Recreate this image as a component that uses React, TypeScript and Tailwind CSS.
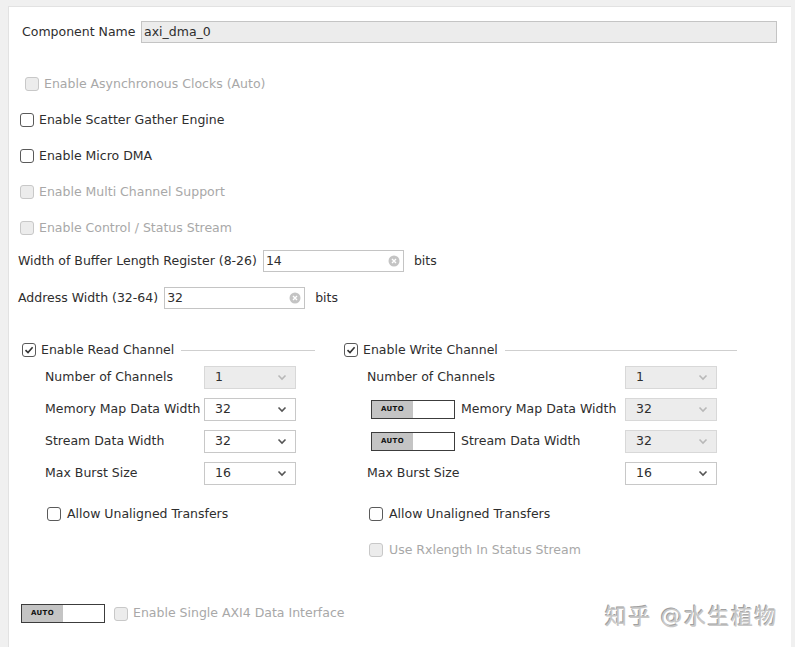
import React from 'react';

const font = { fontFamily: '"DejaVu Sans", "Noto Sans CJK SC", sans-serif' };

function CheckBox({ checked = false, disabled = false }: { checked?: boolean; disabled?: boolean }) {
  return (
    <span
      className={
        'flex h-[14px] w-[14px] shrink-0 items-center justify-center rounded-[3px] border ' +
        (disabled ? 'border-[#c8c8c8] bg-[#ececec]' : 'border-[#5a5a5a] bg-white')
      }
    >
      {checked && (
        <svg width="10" height="10" viewBox="0 0 10 10">
          <path d="M1.5 5.2 L4 7.6 L8.6 2.2" fill="none" stroke="#333" strokeWidth="1.6" />
        </svg>
      )}
    </span>
  );
}

function CheckRow({ label, checked, disabled, gap = 'gap-[5px]' }: { label: string; checked?: boolean; disabled?: boolean; gap?: string }) {
  return (
    <div className={'flex h-[20px] items-center ' + gap}>
      <CheckBox checked={checked} disabled={disabled} />
      <span className={disabled ? 'text-[#a8a8a8]' : 'text-[#2e2e2e]'}>{label}</span>
    </div>
  );
}

function ClearInput({ value, width }: { value: string; width: string }) {
  return (
    <div className={'flex h-[22px] items-center justify-between border border-[#c4c4c4] bg-white pl-[2px] pr-[3px] ' + width}>
      <span>{value}</span>
      <svg width="12" height="12" viewBox="0 0 12 12">
        <circle cx="6" cy="6" r="5.5" fill="#c4c4c4" />
        <path d="M4 4 L8 8 M8 4 L4 8" stroke="#fff" strokeWidth="1.4" />
      </svg>
    </div>
  );
}

function Select({ value, disabled = false }: { value: string; disabled?: boolean }) {
  return (
    <div
      className={
        'flex h-[23px] w-[92px] shrink-0 items-center justify-between border pl-[10px] pr-[8px] ' +
        (disabled ? 'border-[#d8d8d8] bg-[#ececec]' : 'border-[#c8c8c8] bg-white')
      }
    >
      <span>{value}</span>
      <svg width="10" height="7" viewBox="0 0 10 7">
        <path d="M1.5 1.5 L5 5 L8.5 1.5" fill="none" stroke={disabled ? '#b8b8b8' : '#555'} strokeWidth="1.6" />
      </svg>
    </div>
  );
}

function AutoToggle() {
  return (
    <div className="flex h-[19px] w-[84px] shrink-0 border-[1.5px] border-[#3c3c3c] bg-white">
      <div className="flex w-[41px] items-center justify-center bg-[#c4c4c4] text-[7px] font-bold tracking-[0.3px] text-[#111]">
        AUTO
      </div>
    </div>
  );
}

function ParamRow({ label, value, labelWidth, disabled, auto }: { label: string; value: string; labelWidth: string; disabled?: boolean; auto?: boolean }) {
  return (
    <div className="flex h-[23px] items-center">
      {auto ? (
        <div className={'flex items-center gap-[6px] pl-[4px] ' + labelWidth}>
          <AutoToggle />
          <span className="whitespace-nowrap">{label}</span>
        </div>
      ) : (
        <span className={'whitespace-nowrap ' + labelWidth}>{label}</span>
      )}
      <Select value={value} disabled={disabled} />
    </div>
  );
}

function ChannelHeader({ label, lineWidth }: { label: string; lineWidth: string }) {
  return (
    <div className="flex h-[20px] items-center gap-[5px]">
      <CheckBox checked />
      <span>{label}</span>
      <div className={'ml-[2px] h-px bg-[#cfcfcf] ' + lineWidth} />
    </div>
  );
}

export default function App() {
  return (
    <div className="h-[647px] w-[795px] overflow-hidden bg-[#f0f0f0] pl-[8px] pr-[4px] pt-[6px] text-[12.5px] text-[#2e2e2e]" style={font}>
      <div className="relative h-[660px] border-l border-t border-[#e2e2e2] bg-white">
        {/* Component name */}
        <div className="mt-[14px] flex h-[22px] items-center">
          <span className="ml-[13px] w-[119px]">Component Name</span>
          <div className="flex h-[22px] w-[636px] items-center border border-[#c4c4c4] bg-[#ececec] pl-[2px]">axi_dma_0</div>
        </div>

        <div className="ml-[11px] mt-[31px]">
          <div className="ml-[5px]">
            <CheckRow label="Enable Asynchronous Clocks (Auto)" disabled />
          </div>
          <div className="mt-[16px]">
            <CheckRow label="Enable Scatter Gather Engine" />
          </div>
          <div className="mt-[16px]">
            <CheckRow label="Enable Micro DMA" />
          </div>
          <div className="mt-[16px]">
            <CheckRow label="Enable Multi Channel Support" disabled />
          </div>
          <div className="mt-[16px]">
            <CheckRow label="Enable Control / Status Stream" disabled />
          </div>
        </div>

        <div className="ml-[9px] mt-[12px] flex h-[22px] items-center gap-[6px]">
          <span>Width of Buffer Length Register (8-26)</span>
          <ClearInput value="14" width="w-[141px]" />
          <span className="ml-[4px]">bits</span>
        </div>
        <div className="ml-[9px] mt-[15px] flex h-[22px] items-center gap-[6px]">
          <span>Address Width (32-64)</span>
          <ClearInput value="32" width="w-[141px]" />
          <span className="ml-[4px]">bits</span>
        </div>

        {/* Channels */}
        <div className="mt-[31px] flex items-start">
          <div className="ml-[13px] w-[309px]">
            <ChannelHeader label="Enable Read Channel" lineWidth="w-[134px]" />
            <div className="ml-[23px] mt-[6px] flex flex-col gap-[9px]">
              <ParamRow label="Number of Channels" value="1" labelWidth="w-[159px]" disabled />
              <ParamRow label="Memory Map Data Width" value="32" labelWidth="w-[159px]" />
              <ParamRow label="Stream Data Width" value="32" labelWidth="w-[159px]" />
              <ParamRow label="Max Burst Size" value="16" labelWidth="w-[159px]" />
            </div>
            <div className="ml-[25px] mt-[19px]">
              <CheckRow label="Allow Unaligned Transfers" gap="gap-[6px]" />
            </div>
          </div>
          <div className="ml-[13px] w-[400px]">
            <ChannelHeader label="Enable Write Channel" lineWidth="w-[232px]" />
            <div className="ml-[23px] mt-[6px] flex flex-col gap-[9px]">
              <ParamRow label="Number of Channels" value="1" labelWidth="w-[258px]" disabled />
              <ParamRow label="Memory Map Data Width" value="32" labelWidth="w-[258px]" disabled auto />
              <ParamRow label="Stream Data Width" value="32" labelWidth="w-[258px]" disabled auto />
              <ParamRow label="Max Burst Size" value="16" labelWidth="w-[258px]" />
            </div>
            <div className="ml-[25px] mt-[19px]">
              <CheckRow label="Allow Unaligned Transfers" gap="gap-[6px]" />
            </div>
            <div className="ml-[25px] mt-[16px]">
              <CheckRow label="Use Rxlength In Status Stream" disabled gap="gap-[6px]" />
            </div>
          </div>
        </div>

        <div className="ml-[12px] mt-[44px] flex h-[19px] items-center gap-[9px]">
          <AutoToggle />
          <CheckRow label="Enable Single AXI4 Data Interface" disabled gap="gap-[5px]" />
        </div>

        {/* watermark */}
        <div
          className="absolute left-[596px] top-[593px] text-[22px] tracking-[1.5px] text-[#c8c8c8]"
          style={{ textShadow: '1px 1px 0 #fff, -1px -1px 0 #a0a0a0' }}
        >
          知乎 @水生植物
        </div>
      </div>
    </div>
  );
}
